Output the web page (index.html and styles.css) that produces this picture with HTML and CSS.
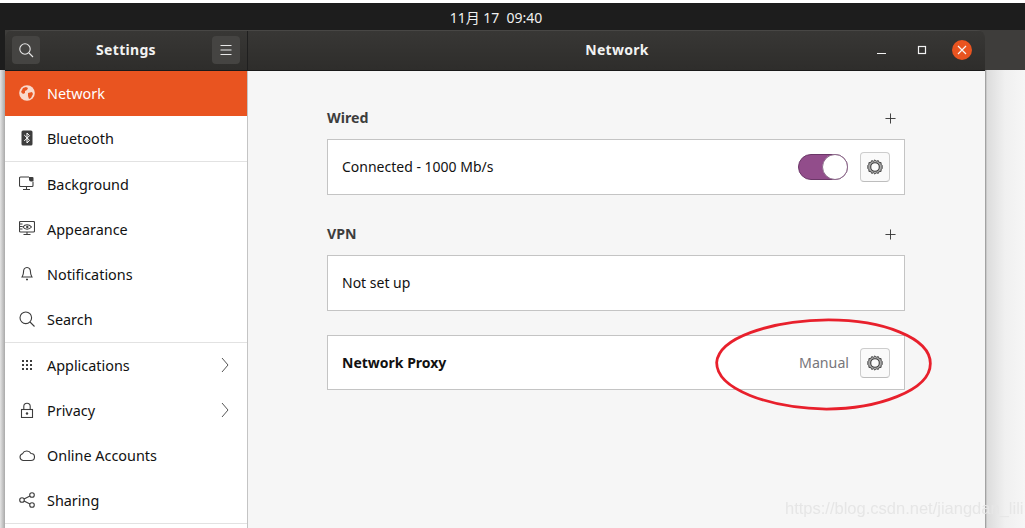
FILE: index.html
```html
<!DOCTYPE html>
<html lang="zh">
<head>
<meta charset="utf-8">
<title>Settings</title>
<link rel="stylesheet" href="styles.css">
</head>
<body>
<div class="topgap"></div>
<div class="panel">11月 17&nbsp;&nbsp;09:40</div>
<div class="desktop">
  <div class="window">
    <header class="titlebar">
      <div class="tb-left">
        <button class="hbtn"><svg class="ic" viewBox="0 0 16 16"><circle cx="7" cy="7" r="5.2"/><path d="M11 11l4 4"/></svg></button>
        <span class="tb-title">Settings</span>
        <button class="hbtn"><svg class="ic" viewBox="0 0 16 16"><path d="M2.5 3.5h11M2.5 8h11M2.5 12.5h11"/></svg></button>
      </div>
      <div class="tb-right">
        <span class="tb-title net-title">Network</span>
        <div class="wm">
          <svg class="wm-ic" viewBox="0 0 12 12"><path d="M1 9.5h9"/></svg>
          <svg class="wm-ic" viewBox="0 0 12 12"><rect x="2.5" y="2.5" width="7" height="7"/></svg>
          <span class="close"><svg class="x-ic" viewBox="0 0 12 12"><path d="M2 2l8 8M10 2l-8 8"/></svg></span>
        </div>
      </div>
    </header>
    <div class="content">
      <nav class="sidebar">
        <div class="row active"><svg class="ic nav-ic" viewBox="0 0 16 16"><circle cx="8" cy="8" r="7.8" class="fillc"/><path class="cut" d="M4 3l3-1 2 1-1 2-2 1v2l-2 1-2-2zM9 8l4-1 1 2-2 4-2 1-1-3z"/></svg><span>Network</span></div>
        <div class="row"><svg class="ic nav-ic" viewBox="0 0 16 16"><rect x="2.5" y="0.5" width="11" height="15" rx="1.5" class="solid"/><path class="bt" d="M5.2 5l5.3 5.3L8 13V3l2.5 2.7L5.200 11"/></svg><span>Bluetooth</span></div>
        <div class="sep"></div>
        <div class="row"><svg class="ic nav-ic" viewBox="0 0 16 16"><path d="M14 6v3.500a1 1 0 0 1-1 1H1.500a1 1 0 0 1-1-1V2a1 1 0 0 1 1-1H10"/><path class="solid" d="M10 1h3.500a1 1 0 0 1 1 1v3.500H12a2 2 0 0 1-2-2z"/><path d="M7.500 10.500v2.500M4 13.500h7"/></svg><span>Background</span></div>
        <div class="row"><svg class="ic nav-ic" viewBox="0 0 16 16"><rect x="0.500" y="0.500" width="15" height="10.500" rx="1"/><path d="M4 6c2-3 6-3 8.500 0-2.500 3-6.500 3-8.500 0zM1 3h2.500M1 5.500h2.500M1 8h2.500M8 11v2M4.500 13.500h7"/><circle cx="8.300" cy="6" r="1.200" class="solid"/></svg><span>Appearance</span></div>
        <div class="row"><svg class="ic nav-ic" viewBox="0 0 16 16"><path d="M8 1.500c-2.500 0-3.500 2-3.500 4.500 0 3-1 4-1.500 5h10c-.5-1-1.500-2-1.500-5 0-2.500-1-4.500-3.500-4.500z"/><path d="M7 13.500h2" class="thick"/></svg><span>Notifications</span></div>
        <div class="row"><svg class="ic nav-ic" viewBox="0 0 16 16"><circle cx="6.800" cy="6.800" r="5.800"/><path d="M11 11l4.500 4.500"/></svg><span>Search</span></div>
        <div class="sep"></div>
        <div class="row"><svg class="ic nav-ic" viewBox="0 0 16 16"><path class="dots" d="M3 3h2v2H3zM7 3h2v2H7zM11 3h2v2h-2zM3 7h2v2H3zM7 7h2v2H7zM11 7h2v2h-2zM3 11h2v2H3zM7 11h2v2H7zM11 11h2v2h-2z"/></svg><span>Applications</span><svg class="chev" viewBox="0 0 8 16"><path d="M1 1l6 7-6 7"/></svg></div>
        <div class="row"><svg class="ic nav-ic" viewBox="0 0 16 16"><rect x="2.500" y="7.500" width="11" height="8"/><path d="M4.800 7.500V4.500a3.200 3.200 0 0 1 6.400 0v3"/><circle cx="8" cy="11.500" r="1.200" class="solid"/></svg><span>Privacy</span><svg class="chev" viewBox="0 0 8 16"><path d="M1 1l6 7-6 7"/></svg></div>
        <div class="row"><svg class="ic nav-ic" viewBox="0 0 16 16"><path d="M4 13.500a3.500 3.500 0 0 1-.5-6.800A4.800 4.800 0 0 1 12 6.500a3.500 3.500 0 0 1 0 7z"/></svg><span>Online Accounts</span></div>
        <div class="row"><svg class="ic nav-ic" viewBox="0 0 16 16"><circle cx="3" cy="8" r="2.300"/><circle cx="13" cy="3" r="2.300"/><circle cx="13" cy="13" r="2.300"/><path d="M5 7l6-3M5 9l6 3"/></svg><span>Sharing</span></div>
        <div class="sep"></div>
      </nav>
      <main class="main">
        <section class="group">
          <div class="group-head"><h2>Wired</h2><svg class="plus" viewBox="0 0 12 12"><path d="M6 .5v11M.5 6h11"/></svg></div>
          <div class="card">
            <span class="label">Connected - 1000 Mb/s</span>
            <span class="switch"><span class="knob"></span></span>
            <button class="gear"><svg viewBox="0 0 16 16" class="gear-ic"><path class="tooth" d="M8 .8l1.400 1.400 1.900-.6.800 1.800 2 .2v2l1.500 1.200L14.800 8l.8 1.200-1.500 1.200v2l-2 .2-.8 1.800-1.900-.6L8 15.200l-1.400-1.400-1.900.6-.8-1.800-2-.2v-2L.4 9.200 1.200 8 .4 6.800l1.500-1.200v-2l2-.2.800-1.800 1.900.6z"/><circle cx="8" cy="8" r="4.300" class="ring"/></svg></button>
          </div>
        </section>
        <section class="group">
          <div class="group-head"><h2>VPN</h2><svg class="plus" viewBox="0 0 12 12"><path d="M6 .5v11M.5 6h11"/></svg></div>
          <div class="card"><span class="label">Not set up</span></div>
        </section>
        <div class="card proxy">
          <span class="label strong">Network Proxy</span>
          <span class="status">Manual</span>
          <button class="gear"><svg viewBox="0 0 16 16" class="gear-ic"><path class="tooth" d="M8 .8l1.400 1.400 1.900-.6.800 1.800 2 .2v2l1.500 1.200L14.800 8l.8 1.200-1.500 1.200v2l-2 .2-.8 1.800-1.900-.6L8 15.200l-1.400-1.400-1.900.6-.8-1.800-2-.2v-2L.4 9.200 1.200 8 .4 6.800l1.500-1.200v-2l2-.2.800-1.800 1.900.6z"/><circle cx="8" cy="8" r="4.300" class="ring"/></svg></button>
        </div>
      </main>
    </div>
  </div>
</div>
<svg class="ellipse" viewBox="0 0 220 94"><path d="M2 45C4 20 55 3 115 2c55 0 103 18 103 44 0 28-55 46-105 46C55 91 2 72 2 45z"/></svg>
<div class="watermark">https://blog.csdn.net/jiangdan_lili</div>
</body>
</html>
```
FILE: styles.css
```css
* { box-sizing: border-box; }
html, body { margin: 0; height: 528px; overflow: hidden; }
body { background: #f7f7f7; font-family: "Noto Sans", "Noto Sans CJK SC", sans-serif; font-size: 14px; color: #111; position: relative; }
.topgap { height: 3px; background: #fff; }
.panel { height: 27px; background: #1d1d1d; color: #f0f0f0; font-size: 14px; display: flex; align-items: center; justify-content: center; padding-right: 33px; }
.desktop { height: 498px; padding-left: 5px; background: linear-gradient(to right, #e4e4e4, #a9a9a9) left 40px / 5px 100% no-repeat, linear-gradient(to bottom, #1d1d1d 40px, #f6f6f6 40px) left / 5px 100% no-repeat, linear-gradient(to bottom, #3e3d3b 40px, #f6f6f6 40px); position: relative; }
.desktop::after { content: ""; position: absolute; left: 985px; top: 40px; width: 40px; bottom: 0; background: linear-gradient(to right, #8f8f8f, #dcdcdc 2px, #f0f0f0 20px, #f6f6f6); }
.window { width: 980px; height: 498px; display: flex; flex-direction: column; overflow: hidden; border-radius: 8px 8px 0 0; }
.titlebar { height: 41px; flex: none; display: flex; background: linear-gradient(#383735, #2e2d2b); border-top: 1px solid #484745; border-bottom: 1px solid #1a1a1a; color: #f2f2f2; }
.tb-left { width: 243px; flex: none; display: flex; align-items: center; justify-content: space-between; padding: 0 7px 1px; border-right: 1px solid #1f1f1f; }
.tb-right { flex: 1; display: flex; align-items: center; position: relative; padding-bottom: 1px; }
.tb-title { font-weight: 700; font-size: 14px; letter-spacing: .3px; padding-bottom: 2px; }
.net-title { flex: 1; text-align: center; padding-left: 1px; }
.hbtn { width: 28px; height: 28px; padding: 0; border: 0; border-radius: 4px; background: #454442; display: flex; align-items: center; justify-content: center; }
.ic { width: 16px; height: 16px; fill: none; stroke: #e8e8e8; stroke-width: 1.1; flex: none; }
.wm { position: absolute; right: 13px; top: 0; bottom: 1px; display: flex; align-items: center; gap: 20px; }
.wm-ic { width: 12px; height: 12px; margin: 0 4px; fill: none; stroke: #f2f2f2; stroke-width: 1.2; display: block; }
.x-ic { width: 12px; height: 12px; fill: none; stroke: #f8f8f8; stroke-width: 1.2; display: block; }
.close { width: 20px; height: 20px; border-radius: 50%; background: #e95420; display: flex; align-items: center; justify-content: center; }
.content { flex: 1; display: flex; min-height: 0; }
.sidebar { width: 243px; flex: none; background: #fff; border-right: 1px solid #c4c4c4; }
.row { height: 45px; display: flex; align-items: center; padding: 0 18px 1px 14px; gap: 12px; font-size: 14.400px; color: #111; }
.row span { flex: 1; }
.nav-ic { stroke: #3d3d3d; }
.active { background: #e95420; color: #fff; }
.active .nav-ic { stroke: none; }
.fillc { fill: #f9d9cc; stroke: none; }
.cut { fill: #e95420; stroke: none; }
.solid { fill: #3d3d3d; stroke: none; }
.bt { stroke: #fff; fill: none; stroke-width: 1; }
.thick { stroke-width: 1.500; }
.dots { fill: #3d3d3d; stroke: none; }
.chev { width: 8px; height: 16px; fill: none; stroke: #555; stroke-width: 1; }
.sep { height: 1px; background: #e2e2e2; }
.main { flex: 1; background: #f6f6f6; padding: 0 80px 0 79px; }
.group { margin-bottom: 24px; }
.group-head { height: 68px; display: flex; align-items: flex-end; justify-content: space-between; padding: 0 9px 11px 0; }
.group + .group .group-head { height: 36px; }
.group-head h2 { margin: 0; font-size: 14.200px; font-weight: 700; color: #3d3d3d; line-height: 20px; }
.plus { width: 11px; height: 11px; fill: none; stroke: #333; stroke-width: 1; margin-bottom: 4px; }
.card { height: 56px; background: #fff; border: 1px solid #c4c4c4; display: flex; align-items: center; padding: 0 14px; }
.proxy { height: 55px; }
.label { flex: 1; font-size: 14px; padding-bottom: 2px; }
.strong { font-weight: 700; padding-bottom: 0; }
.status { color: #77767b; font-size: 14.200px; margin-right: 11px; }
.switch { width: 50px; height: 26px; border-radius: 13px; background: #924d8b; border: 1px solid #6b3768; position: relative; margin-right: 12px; }
.knob { position: absolute; right: -1px; top: -1px; width: 26px; height: 26px; border-radius: 50%; background: #fff; border: 1px solid #8c6a8a; }
.gear { width: 30px; height: 30px; padding: 0; border: 1px solid #cdcdcd; border-bottom-color: #bdbdbd; border-radius: 4px; background: #fafafa; display: flex; align-items: center; justify-content: center; }
.gear-ic { width: 16px; height: 16px; fill: none; }
.tooth { fill: #a8a8a8; stroke: #3d3d3d; stroke-width: .9; }
.ring { fill: #fafafa; stroke: #3d3d3d; stroke-width: 1.100; }
.ellipse { position: absolute; left: 714px; top: 318px; width: 219px; height: 93px; fill: none; stroke: #e8202c; stroke-width: 2.800; }
.watermark { position: absolute; left: 785px; top: 499px; font-family: "Liberation Sans", sans-serif; font-size: 16.500px; color: #e6e6e6; white-space: nowrap; filter: blur(.4px); }
```
